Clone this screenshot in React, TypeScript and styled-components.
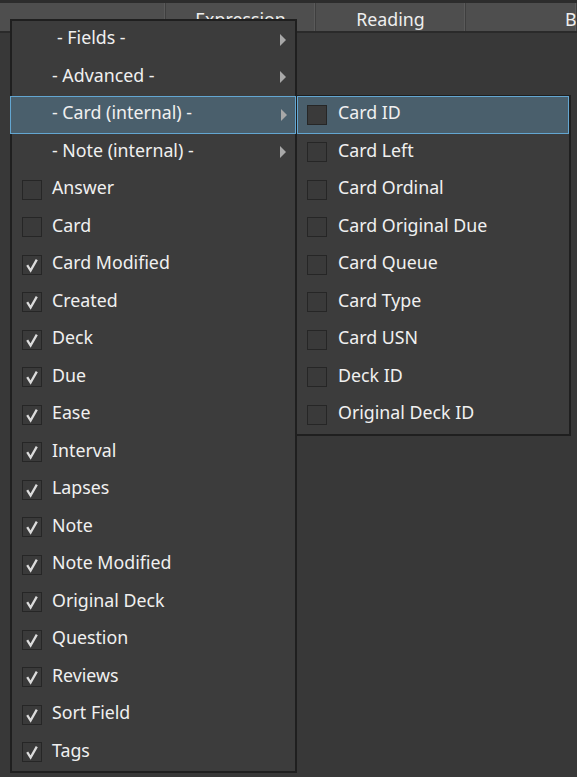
import React from "react";
import styled, { createGlobalStyle } from "styled-components";

const Global = createGlobalStyle`
  html, body { margin: 0; padding: 0; background: #383838; }
  body { font-family: "Noto Sans", "Open Sans", sans-serif; }
  #root { width: 577px; height: 777px; overflow: hidden; }
`;

const Page = styled.div`
  position: relative;
  width: 577px;
  height: 777px;
  background: #383838;
  overflow: hidden;
  border-top: 3px solid #2c2c2c;
  box-sizing: border-box;
`;

const Header = styled.div`
  display: flex;
  height: 28px;
  background: #4e4e4e;
  border-bottom: 2px solid #2a2a2a;
`;

const HeaderCell = styled.div<{ $w?: number; $align?: string; $padLeft?: number }>`
  flex: ${(p) => (p.$w ? `0 0 ${p.$w}px` : "1 1 auto")};
  box-sizing: border-box;
  border-right: 1px solid #3e3e3e;
  box-shadow: inset -1px 0 0 #5a5a5a;
  display: flex;
  align-items: center;
  justify-content: ${(p) => p.$align || "center"};
  padding-top: 4px;
  padding-left: ${(p) => p.$padLeft || 0}px;
  font-size: 17.8px;
  color: #eeeeee;
  white-space: nowrap;
  overflow: hidden;
`;

const Menu = styled.div<{ $left: number; $top: number; $width: number }>`
  position: absolute;
  left: ${(p) => p.$left}px;
  top: ${(p) => p.$top}px;
  width: ${(p) => p.$width}px;
  background: #3c3c3c;
  border: 2px solid #1f1f1f;
  box-sizing: border-box;
  display: flex;
  flex-direction: column;
`;

const SubMenu = styled(Menu)`
  border-top-width: 1px;
  border-left-width: 1px;
`;

const Item = styled.div<{ $active?: boolean; $textLeft: number }>`
  position: relative;
  height: 37.5px;
  flex: 0 0 37.5px;
  box-sizing: border-box;
  display: flex;
  align-items: center;
  padding-left: ${(p) => p.$textLeft}px;
  padding-bottom: 5px;
  font-size: 17.8px;
  color: #f0f0f0;
  white-space: nowrap;
  background: ${(p) => (p.$active ? "#4a5f6c" : "transparent")};
  ${(p) => (p.$active ? "outline: 1px solid #63a6d1; outline-offset: -1px;" : "")}
`;

const ActiveMain = styled(Item)`
  margin-left: -2px;
  margin-right: -1px;
  padding-left: ${(p) => p.$textLeft + 2}px;
`;

const Box = styled.span`
  position: absolute;
  left: 10px;
  top: 50%;
  margin-top: -10px;
  width: 20px;
  height: 20px;
  box-sizing: border-box;
  border: 1px solid #262626;
  background: #3a3a3a;
  display: flex;
  align-items: center;
  justify-content: center;
`;

const Arrow = styled.span`
  position: absolute;
  right: 9px;
  top: 50%;
  margin-top: -6px;
  width: 0;
  height: 0;
  border-top: 6px solid transparent;
  border-bottom: 6px solid transparent;
  border-left: 6px solid #a8a8a8;
`;

const Check = () => (
  <svg width="16" height="16" viewBox="0 0 16 16">
    <path d="M3.2 8.2 L6.6 13.6 L12.8 2.6" fill="none" stroke="#dcdcdc" strokeWidth="2.3" strokeLinejoin="miter" />
  </svg>
);

const groups = [
  { label: "- Fields -", indent: 5 },
  { label: "- Advanced -", indent: 0 },
  { label: "- Card (internal) -", indent: 0, active: true },
  { label: "- Note (internal) -", indent: 0 },
];

const columns: [string, boolean][] = [
  ["Answer", false],
  ["Card", false],
  ["Card Modified", true],
  ["Created", true],
  ["Deck", true],
  ["Due", true],
  ["Ease", true],
  ["Interval", true],
  ["Lapses", true],
  ["Note", true],
  ["Note Modified", true],
  ["Original Deck", true],
  ["Question", true],
  ["Reviews", true],
  ["Sort Field", true],
  ["Tags", true],
];

const internal = [
  "Card ID",
  "Card Left",
  "Card Ordinal",
  "Card Original Due",
  "Card Queue",
  "Card Type",
  "Card USN",
  "Deck ID",
  "Original Deck ID",
];

export default function App() {
  return (
    <Page>
      <Global />
      <Header>
        <HeaderCell $w={166}></HeaderCell>
        <HeaderCell $w={150}>Expression</HeaderCell>
        <HeaderCell $w={150}>Reading</HeaderCell>
        <HeaderCell $align="flex-start" $padLeft={99}>
          B
        </HeaderCell>
      </Header>

      <Menu $left={10} $top={16} $width={287}>
        {groups.map((g) =>
          g.active ? (
            <ActiveMain key={g.label} $active $textLeft={40 + g.indent}>
              {g.label}
              <Arrow />
            </ActiveMain>
          ) : (
            <Item key={g.label} $textLeft={40 + g.indent}>
              {g.label}
              <Arrow />
            </Item>
          )
        )}
        {columns.map(([label, on]) => (
          <Item key={label} $textLeft={40}>
            <Box>{on && <Check />}</Box>
            {label}
          </Item>
        ))}
      </Menu>

      <SubMenu $left={296} $top={92} $width={275}>
        {internal.map((label, i) => (
          <Item key={label} $active={i === 0} $textLeft={41}>
            <Box>{null}</Box>
            {label}
          </Item>
        ))}
      </SubMenu>
    </Page>
  );
}
